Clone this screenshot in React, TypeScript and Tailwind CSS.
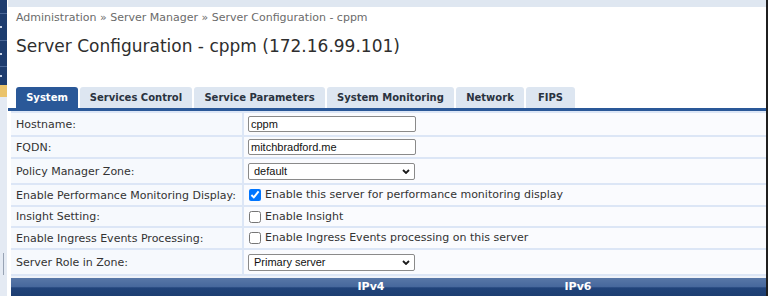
import React from "react";

const tabs = [
  { label: "System", w: "w-[62px]", active: true },
  { label: "Services Control", w: "w-[112px]" },
  { label: "Service Parameters", w: "w-[131px]" },
  { label: "System Monitoring", w: "w-[127px]" },
  { label: "Network", w: "w-[68px]" },
  { label: "FIPS", w: "w-[49px]" },
];

function TextInput({ value }: { value: string }) {
  return (
    <input
      type="text"
      defaultValue={value}
      className="block w-[168px] h-[16px] border border-[#8a8a8a] rounded-[2px] bg-white pl-[2px] py-0 leading-[14px] text-[11px] text-[#111] font-['Liberation_Sans',Arial,sans-serif] outline-none"
    />
  );
}

function Select({ value }: { value: string }) {
  return (
    <div className="relative w-[167px] h-[17px] border border-[#8a8a8a] rounded-[2px] bg-white flex items-center">
      <select
        defaultValue={value}
        className="appearance-none block w-full h-[15px] py-0 pl-[5px] leading-[15px] bg-transparent border-0 text-[11px] text-[#111] font-['Liberation_Sans',Arial,sans-serif] outline-none"
      >
        <option>{value}</option>
      </select>
      <svg
        className="absolute right-[4px] top-[5px] pointer-events-none"
        width="8"
        height="5"
        viewBox="0 0 8 5"
      >
        <path d="M1 1l3 3 3-3" fill="none" stroke="#1a1a1a" strokeWidth="1.8" />
      </svg>
    </div>
  );
}

function Check({ checked, label }: { checked?: boolean; label: string }) {
  return (
    <label className="flex items-center h-[16px]">
      <input
        type="checkbox"
        defaultChecked={checked}
        className="block w-[12px] h-[12px] m-0 ml-[1px] accent-[#0075ff]"
      />
      <span className="ml-[4px] leading-[16px] text-[11px] text-[#333]">{label}</span>
    </label>
  );
}

const rows: { label: string; h: string; content: React.ReactNode }[] = [
  { label: "Hostname:", h: "h-[22px]", content: <TextInput value="cppm" /> },
  { label: "FQDN:", h: "h-[20px]", content: <TextInput value="mitchbradford.me" /> },
  { label: "Policy Manager Zone:", h: "h-[24px]", content: <Select value="default" /> },
  {
    label: "Enable Performance Monitoring Display:",
    h: "h-[20px]",
    content: <Check checked label="Enable this server for performance monitoring display" />,
  },
  { label: "Insight Setting:", h: "h-[19px]", content: <Check label="Enable Insight" /> },
  {
    label: "Enable Ingress Events Processing:",
    h: "h-[20px]",
    content: <Check label="Enable Ingress Events processing on this server" />,
  },
  { label: "Server Role in Zone:", h: "h-[24px]", content: <Select value="Primary server" /> },
];

export default function App() {
  return (
    <div className="w-[768px] h-[296px] overflow-hidden flex bg-white font-['DejaVu_Sans',Verdana,sans-serif]">
      {/* left sidebar edge */}
      <aside className="w-[7px] shrink-0 flex flex-col">
        <div className="h-[85px] bg-[#1d3c6e] flex flex-col">
          <div className="h-[13px]" />
          <div className="h-[1px] bg-[#4a6797]" />
          <div className="h-[26px] flex items-center"><div className="w-[2px] h-[2px] bg-[#c8d3e6]" /></div>
          <div className="h-[1px] bg-[#4a6797]" />
          <div className="h-[25px] flex items-center"><div className="w-[2px] h-[2px] bg-[#c8d3e6]" /></div>
          <div className="h-[1px] bg-[#4a6797]" />
          <div className="flex-1 flex items-center"><div className="w-[2px] h-[2px] bg-[#c8d3e6]" /></div>
        </div>
        <div className="h-[12px] bg-[#eac36b]" />
        <div className="flex-1 bg-[#e4eaf3] flex flex-col items-center">
          <div className="h-[156px]" />
          <div className="w-[1px] h-[22px] bg-[#98a3b4]" />
        </div>
      </aside>
      <div className="w-[1px] shrink-0 bg-white" />

      <main className="flex-1 min-w-0 flex flex-col">
        <div className="h-[7px] bg-[#dfe7f1] shrink-0" />
        <div className="pl-[8px] mt-[4px] h-[14px] leading-[14px] text-[11px] text-[#6b6b6b] whitespace-nowrap shrink-0">
          Administration » Server Manager » Server Configuration - cppm
        </div>
        <h1 className="pl-[8px] mt-[9px] h-[24px] leading-[24px] text-[17px] text-[#2e2e2e] font-normal whitespace-nowrap shrink-0">
          Server Configuration - cppm (172.16.99.101)
        </h1>

        {/* tabs */}
        <div className="mt-[29px] pl-[8px] flex gap-[2px] items-end shrink-0">
          {tabs.map((t) => (
            <div
              key={t.label}
              className={`${t.w} h-[21px] rounded-t-[3px] flex items-center justify-center text-[10px] font-bold whitespace-nowrap ${
                t.active ? "bg-[#2a5898] text-white" : "bg-[#dde6f1] text-[#2a3340]"
              }`}
            >
              {t.label}
            </div>
          ))}
        </div>
        <div className="h-[3px] bg-[#2a5898] shrink-0" />

        {/* form table */}
        <div className="ml-[3px] bg-[#dce6f6] pt-[2px] pb-[2px] grid grid-cols-[231px_1fr] gap-[2px] shrink-0">
          {rows.map((r) => (
            <React.Fragment key={r.label}>
              <div className={`${r.h} bg-[#f6f9fd] pl-[5px] pt-[1px] flex items-center text-[11px] leading-[14px] text-[#333] whitespace-nowrap`}>
                {r.label}
              </div>
              <div className={`${r.h} bg-[#fafbfe] pl-[4px] flex items-center`}>{r.content}</div>
            </React.Fragment>
          ))}
        </div>
        <div className="ml-[3px] h-[2px] bg-[#eef2f9] shrink-0" />
        <div className="ml-[3px] h-[18px] shrink-0 grid grid-cols-[233px_254px_160px_1fr] items-center text-[11px] font-bold text-white bg-[linear-gradient(to_bottom,#5877a7_0%,#46679c_50%,#21437a_54%,#1d3e72_100%)]">
          <div />
          <div className="text-center">IPv4</div>
          <div className="text-center">IPv6</div>
          <div />
        </div>
      </main>

      <div className="w-[2px] shrink-0 bg-[#1f1f1f]" />
    </div>
  );
}
